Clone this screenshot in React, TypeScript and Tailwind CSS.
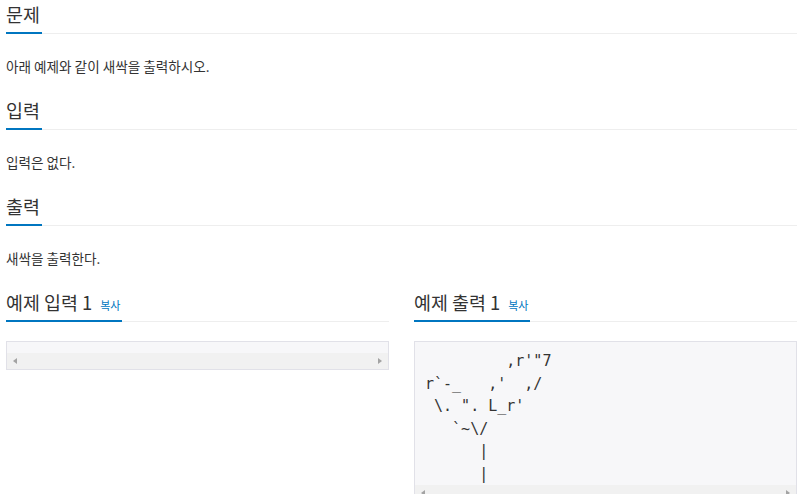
const art = `         ,r'"7
r\`-_   ,'  ,/
 \\. ". L_r'
   \`~\\/
      |
      |`;

function Headline({ title, copy }: { title: string; copy?: boolean }) {
  return (
    <div className="flex border-b border-[#eeeeee]">
      <h2 className="-mb-px border-b-2 border-[#0076c0] pb-1 pr-[2px] text-[18.4px] leading-[28px] font-normal text-[#333]">
        {title}
        {copy && (
          <a className="ml-[8px] text-[11px] leading-none text-[#0076c0]">복사</a>
        )}
      </h2>
    </div>
  );
}

function Section({ title, text }: { title: string; text: string }) {
  return (
    <section className="mb-5">
      <Headline title={title} />
      <p className="mt-[22px] text-[13.6px] leading-5 text-[#333]">{text}</p>
    </section>
  );
}

function ScrollBar() {
  return (
    <div className="flex h-4 items-center justify-between bg-[#f1f1f1] px-[6px]">
      <span className="h-0 w-0 border-y-[3.5px] border-r-[4px] border-y-transparent border-r-[#a3a3a3]" />
      <span className="h-0 w-0 border-y-[3.5px] border-l-[4px] border-y-transparent border-l-[#a3a3a3]" />
    </div>
  );
}

export default function App() {
  return (
    <main
      className="min-h-screen bg-white pl-[6px] pr-[3px]"
      style={{ fontFamily: '"Noto Sans CJK KR", "Noto Sans", sans-serif' }}
    >
      <Section title="문제" text="아래 예제와 같이 새싹을 출력하시오." />
      <Section title="입력" text="입력은 없다." />
      <Section title="출력" text="새싹을 출력한다." />

      <div className="grid grid-cols-2 gap-[25px]">
        <div>
          <Headline title="예제 입력 1" copy />
          <div className="mt-[19px] border border-[#e1e1e8] bg-[#f7f7f9]">
            <div className="h-[11px]" />
            <ScrollBar />
          </div>
        </div>
        <div>
          <Headline title="예제 출력 1" copy />
          <div className="mt-[19px] border border-[#e1e1e8] bg-[#f7f7f9]">
            <pre className="pl-[10px] pt-[8px] font-['DejaVu_Sans_Mono',monospace] text-[15px] leading-[22.5px] text-[#333]">
              {art}
            </pre>
            <ScrollBar />
          </div>
        </div>
      </div>
    </main>
  );
}
